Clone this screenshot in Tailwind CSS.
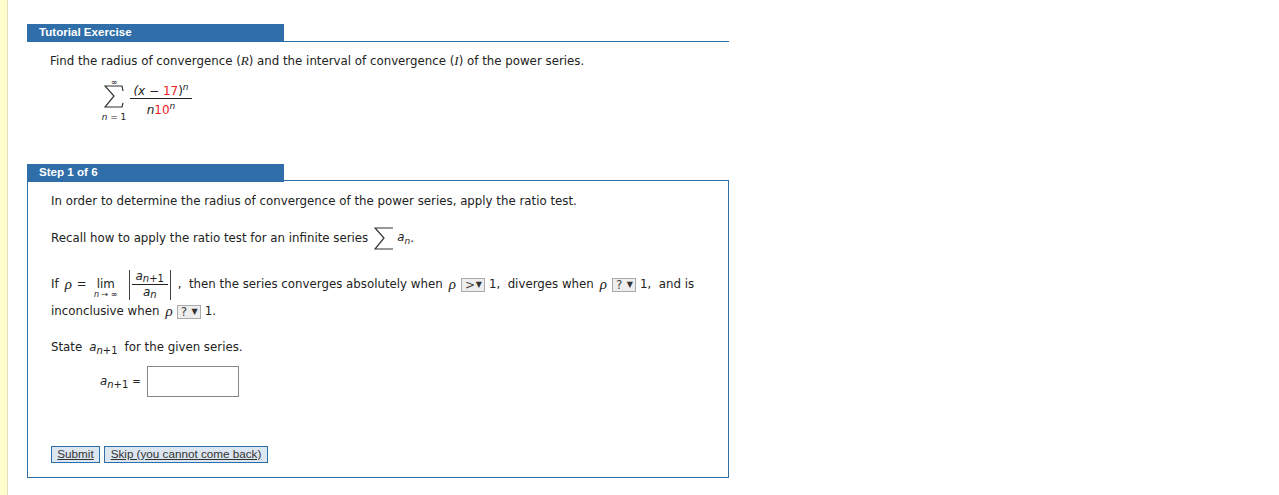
<!DOCTYPE html>
<html lang="en">
<head>
<meta charset="UTF-8">
<title>Tutorial Exercise</title>
<script src="https://cdn.jsdelivr.net/npm/@tailwindcss/browser@4"></script>
</head>
<body class="bg-white overflow-hidden">
<div class="flex h-[495px] font-['DejaVu_Sans',sans-serif] text-[11.8px] text-[#222]">
  <div class="w-[8px] shrink-0 bg-[#ffffcc] border-r border-[#e0e0c0]"></div>
  <div class="w-[702px] ml-[19px] pt-[24px]">

    <div class="border-b border-[#2f6ea9] h-[18px]">
      <div class="w-[257px] h-[18px] bg-[#2f6ea9] pl-[12px] font-['Liberation_Sans',sans-serif] font-bold text-[11.6px] leading-[16px] text-white">Tutorial Exercise</div>
    </div>
    <p class="ml-[23px] mt-[12px] leading-[14px]">Find the radius of convergence (<i class="font-['Liberation_Serif',serif] text-[13px]">R</i>) and the interval of convergence (<i class="font-['Liberation_Serif',serif] text-[13px]">I</i>) of the power series.</p>
    <div class="ml-[73px] mt-[11px] h-[44px] flex items-start">
      <div class="w-[28px] flex flex-col items-center">
        <span class="text-[8px] leading-[6px] mt-[1px] -mb-[1px]">∞</span>
        <svg width="20" height="24" viewBox="0 0 20 24" class="block"><path d="M19 6 L18 1 H1 L10 11 L1 22 H18 L19 18" fill="none" stroke="#333" stroke-width="1.2"/></svg>
        <span class="text-[9px] leading-[9px] mt-[4px] whitespace-nowrap"><i>n</i> = 1</span>
      </div>
      <div class="ml-[2px] mt-[6px] w-[62px] text-center text-[12px]">
        <div class="border-b border-[#222] h-[14px] leading-[13px] whitespace-nowrap"><i>(x</i> − <span class="text-[#e22]">17</span>)<sup class="text-[9px] italic leading-none -top-[5px] relative align-baseline">n</sup></div>
        <div class="leading-[16px] mt-[3px] whitespace-nowrap"><i>n</i><span class="text-[#e22]">10</span><sup class="text-[9px] italic leading-none relative -top-[5px] align-baseline">n</sup></div>
      </div>
    </div>

    <div class="mt-[41px] h-[18px]">
      <div class="w-[257px] h-[18px] bg-[#2f6ea9] pl-[12px] font-['Liberation_Sans',sans-serif] font-bold text-[11.6px] leading-[16px] text-white">Step 1 of 6</div>
    </div>
    <div class="border border-[#2f6ea9] -mt-[2px] h-[298px] pl-[23px]">
      <p class="mt-[13px] leading-[14px]">In order to determine the radius of convergence of the power series, apply the ratio test.</p>
      <div class="mt-[19px] h-[24px] flex items-center">
        <span>Recall how to apply the ratio test for an infinite series</span>
        <svg width="20" height="23" viewBox="0 0 20 23" class="ml-[6px] -mt-[1px]"><path d="M19 1 H1 L10 11 L1 22 H19" fill="none" stroke="#333" stroke-width="1.2"/></svg>
        <span class="ml-[3px] italic relative -top-[1px]">a<sub class="text-[9px] leading-none align-baseline relative top-[3px]">n</sub></span><span>.</span>
      </div>
      <div class="mt-[17px] h-[34px] flex items-center whitespace-nowrap">
        <span>If</span>
        <i class="ml-[6px] font-['Liberation_Serif',serif] text-[15px] relative -top-[1px]">ρ</i>
        <span class="ml-[5px]">=</span>
        <span class="ml-[6px] w-[26px] flex flex-col items-center mt-[5px]">
          <span class="leading-[14px]">lim</span>
          <span class="text-[8px] leading-[8px]"><i>n</i> → ∞</span>
        </span>
        <span class="ml-[10px] border-x border-[#444] w-[42px] h-[30px] px-[2px] text-center text-[12px] italic">
          <span class="block border-b border-[#222] h-[15px] leading-[12px]">a<span class="text-[10px] not-italic relative top-[2px]"><i>n</i>+1</span></span>
          <span class="block leading-[15px]">a<span class="text-[10px] relative top-[2px]">n</span></span>
        </span>
        <span class="ml-[7px]">,&nbsp; then the series converges absolutely when</span>
        <i class="ml-[6px] font-['Liberation_Serif',serif] text-[15px] relative -top-[1px]">ρ</i>
        <span class="ml-[5px] w-[24px] h-[14px] bg-[#eee] border border-[#aaa] flex items-center justify-between pl-[3px] pr-[2px] text-[12px] leading-none text-[#444]">&gt;<span class="text-[8px] text-[#333]">▼</span></span>
        <span class="ml-[4px]">1,&nbsp; diverges when</span>
        <i class="ml-[6px] font-['Liberation_Serif',serif] text-[15px] relative -top-[1px]">ρ</i>
        <span class="ml-[5px] w-[24px] h-[14px] bg-[#eee] border border-[#aaa] flex items-center justify-between pl-[3px] pr-[2px] text-[12px] leading-none text-[#444]">?<span class="text-[8px] text-[#333]">▼</span></span>
        <span class="ml-[4px]">1,&nbsp; and is</span>
      </div>
      <div class="mt-[1px] h-[18px] flex items-center whitespace-nowrap">
        <span>inconclusive when</span>
        <i class="ml-[6px] font-['Liberation_Serif',serif] text-[15px] relative -top-[1px]">ρ</i>
        <span class="ml-[4px] w-[24px] h-[14px] bg-[#eee] border border-[#aaa] flex items-center justify-between pl-[3px] pr-[2px] text-[12px] leading-none text-[#444]">?<span class="text-[8px] text-[#333]">▼</span></span>
        <span class="ml-[4px]">1.</span>
      </div>
      <div class="mt-[18px] h-[18px] flex items-center whitespace-nowrap">
        <span>State</span>
        <span class="ml-[7px] italic">a<span class="text-[10px] relative top-[3px]"><i>n</i><span class="not-italic">+1</span></span></span>
        <span class="ml-[7px]">for the given series.</span>
      </div>
      <div class="ml-[49px] mt-[9px] h-[31px] flex items-center whitespace-nowrap">
        <span class="italic">a<span class="text-[10px] relative top-[3px]"><i>n</i><span class="not-italic">+1</span></span></span>
        <span class="ml-[4px] text-[10px]">=</span>
        <input type="text" class="ml-[6px] w-[92px] h-[31px] bg-white border border-[#888] outline-none">
      </div>
      <div class="mt-[49px] flex gap-[4px] font-['Liberation_Sans',sans-serif] text-[11.7px] leading-none">
        <button class="w-[49px] h-[17px] pb-[2px] bg-[#dce6f1] border border-[#2f6ea9] text-[#333] underline">Submit</button>
        <button class="w-[164px] h-[17px] pb-[2px] bg-[#dce6f1] border border-[#2f6ea9] text-[#333] underline whitespace-nowrap">Skip (you cannot come back)</button>
      </div>
    </div>
  </div>
</div>
</body>
</html>
